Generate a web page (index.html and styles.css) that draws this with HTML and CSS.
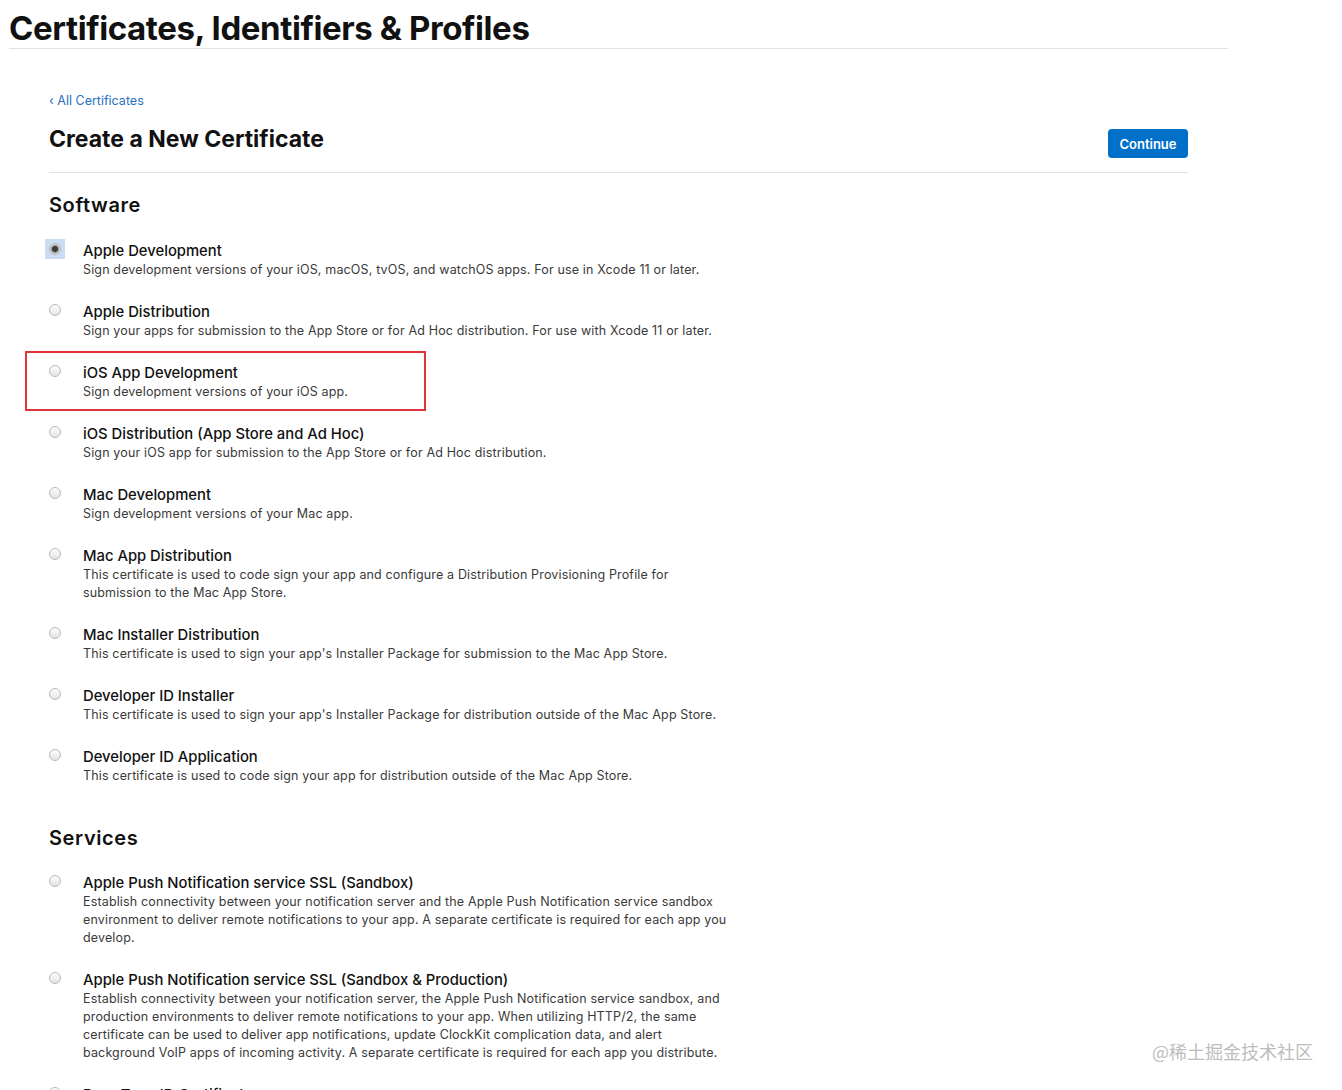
FILE: index.html
```html
<!DOCTYPE html>
<html lang="en">

<head>
	<meta charset="UTF-8">
	<meta name="viewport" content="width=device-width, initial-scale=1.0">
	<title>Certificates, Identifiers &amp; Profiles</title>
	<link rel="stylesheet" href="styles.css">
</head>

<body>
	<header class="page-header">
		<h1>Certificates, Identifiers &amp; Profiles</h1>
	</header>

	<main class="content">
		<a class="back-link" href="#">&lsaquo; All Certificates</a>

		<div class="title-row">
			<h2 class="page-title">Create a New Certificate</h2>
			<button class="btn-continue">Continue</button>
		</div>

		<section class="cert-section">
			<h3>Software</h3>
			<ul class="cert-list">
				<li class="cert-item">
					<span class="radio-box focused"><input type="radio" name="cert" class="radio" checked></span>
					<div class="cert-text">
						<div class="cert-name">Apple Development</div>
						<p class="cert-desc">Sign development versions of your iOS, macOS, tvOS, and watchOS apps. For use in Xcode 11 or later.</p>
					</div>
				</li>
				<li class="cert-item">
					<span class="radio-box"><input type="radio" name="cert" class="radio"></span>
					<div class="cert-text">
						<div class="cert-name">Apple Distribution</div>
						<p class="cert-desc">Sign your apps for submission to the App Store or for Ad Hoc distribution. For use with Xcode 11 or later.</p>
					</div>
				</li>
				<li class="cert-item marked">
					<span class="radio-box"><input type="radio" name="cert" class="radio"></span>
					<div class="cert-text">
						<div class="cert-name">iOS App Development</div>
						<p class="cert-desc">Sign development versions of your iOS app.</p>
					</div>
				</li>
				<li class="cert-item">
					<span class="radio-box"><input type="radio" name="cert" class="radio"></span>
					<div class="cert-text">
						<div class="cert-name">iOS Distribution (App Store and Ad Hoc)</div>
						<p class="cert-desc">Sign your iOS app for submission to the App Store or for Ad Hoc distribution.</p>
					</div>
				</li>
				<li class="cert-item">
					<span class="radio-box"><input type="radio" name="cert" class="radio"></span>
					<div class="cert-text">
						<div class="cert-name">Mac Development</div>
						<p class="cert-desc">Sign development versions of your Mac app.</p>
					</div>
				</li>
				<li class="cert-item">
					<span class="radio-box"><input type="radio" name="cert" class="radio"></span>
					<div class="cert-text">
						<div class="cert-name">Mac App Distribution</div>
						<p class="cert-desc">This certificate is used to code sign your app and configure a Distribution Provisioning Profile for submission to the Mac App Store.</p>
					</div>
				</li>
				<li class="cert-item">
					<span class="radio-box"><input type="radio" name="cert" class="radio"></span>
					<div class="cert-text">
						<div class="cert-name">Mac Installer Distribution</div>
						<p class="cert-desc">This certificate is used to sign your app's Installer Package for submission to the Mac App Store.</p>
					</div>
				</li>
				<li class="cert-item">
					<span class="radio-box"><input type="radio" name="cert" class="radio"></span>
					<div class="cert-text">
						<div class="cert-name">Developer ID Installer</div>
						<p class="cert-desc">This certificate is used to sign your app's Installer Package for distribution outside of the Mac App Store.</p>
					</div>
				</li>
				<li class="cert-item">
					<span class="radio-box"><input type="radio" name="cert" class="radio"></span>
					<div class="cert-text">
						<div class="cert-name">Developer ID Application</div>
						<p class="cert-desc">This certificate is used to code sign your app for distribution outside of the Mac App Store.</p>
					</div>
				</li>
			</ul>
		</section>

		<section class="cert-section">
			<h3>Services</h3>
			<ul class="cert-list">
				<li class="cert-item">
					<span class="radio-box"><input type="radio" name="cert" class="radio"></span>
					<div class="cert-text">
						<div class="cert-name">Apple Push Notification service SSL (Sandbox)</div>
						<p class="cert-desc">Establish connectivity between your notification server and the Apple Push Notification service sandbox environment to deliver remote notifications to your app. A separate certificate is required for each app you develop.</p>
					</div>
				</li>
				<li class="cert-item">
					<span class="radio-box"><input type="radio" name="cert" class="radio"></span>
					<div class="cert-text">
						<div class="cert-name">Apple Push Notification service SSL (Sandbox &amp; Production)</div>
						<p class="cert-desc">Establish connectivity between your notification server, the Apple Push Notification service sandbox, and production environments to deliver remote notifications to your app. When utilizing HTTP/2, the same certificate can be used to deliver app notifications, update ClockKit complication data, and alert background VoIP apps of incoming activity. A separate certificate is required for each app you distribute.</p>
					</div>
				</li>
				<li class="cert-item">
					<span class="radio-box"><input type="radio" name="cert" class="radio"></span>
					<div class="cert-text">
						<div class="cert-name">Pass Type ID Certificate</div>
						<p class="cert-desc">Sign and send updates to passes in Wallet.</p>
					</div>
				</li>
			</ul>
		</section>
	</main>

	<div class="watermark">@稀土掘金技术社区</div>
</body>

</html>
```

FILE: styles.css
```css
body {
	margin: 0;
	font-family: 'Inter', 'Noto Sans', sans-serif;
	color: #1d1d1f;
	background: #fff;
	height: 1090px;
	overflow: hidden;
	position: relative;
}

.page-header {
	margin-left: 9px;
	width: 1219px;
	border-bottom: 1px solid #e2e2e2;
}

.page-header h1 {
	margin: 0;
	padding-top: 9px;
	font-size: 33px;
	line-height: 39px;
	font-weight: 700;
	letter-spacing: -0.4px;
	color: #111;
}

.content {
	margin-left: 49px;
	width: 1139px;
}

.back-link {
	display: block;
	margin-top: 44px;
	font-size: 12.5px;
	line-height: 16px;
	color: #2a70c0;
	text-decoration: none;
}

.title-row {
	display: flex;
	justify-content: space-between;
	align-items: flex-start;
	margin-top: 15px;
	padding-bottom: 14px;
	border-bottom: 1px solid #e2e2e2;
}

.page-title {
	margin: 0;
	font-size: 23px;
	line-height: 30px;
	font-weight: 700;
	color: #111;
}

.btn-continue {
	margin-top: 5px;
	width: 80px;
	height: 29px;
	padding: 0;
	border: none;
	border-radius: 4px;
	background: #0070c9;
	color: #fff;
	font-family: inherit;
	font-size: 13px;
	font-weight: 600;
	cursor: pointer;
}

.cert-section h3 {
	margin: 20px 0 24px;
	font-size: 20px;
	line-height: 24px;
	font-weight: 600;
	letter-spacing: 0.6px;
	color: #111;
}

.cert-section + .cert-section h3 {
	margin-top: 41px;
	margin-bottom: 23px;
}

.cert-list {
	list-style: none;
	margin: 0;
	padding: 0;
}

.cert-item {
	display: flex;
	align-items: flex-start;
	gap: 22px;
	margin-bottom: 23px;
	position: relative;
}

.cert-item.marked::after {
	content: "";
	position: absolute;
	top: -12px;
	left: -24px;
	width: 397px;
	height: 56px;
	border: 2px solid #e2353b;
}

.radio-box {
	display: flex;
	flex: none;
	margin: -2px -4px 0;
	padding: 4px;
}

.radio-box.focused {
	background: #c9dcf4;
}

.radio {
	appearance: none;
	-webkit-appearance: none;
	display: block;
	width: 12px;
	height: 12px;
	margin: 0;
	border: 1px solid #b9b9b9;
	border-radius: 50%;
	background: linear-gradient(#fdfdfd, #e4e4e4);
}

.radio:checked {
	background: radial-gradient(circle, #3c3c3c 0 2.5px, #9a9a9a 3.5px, #e2e2e2 5px);
}

.cert-name {
	font-size: 14.8px;
	line-height: 20px;
	font-weight: 500;
	color: #111;
}

.cert-desc {
	margin: 0;
	max-width: 648px;
	font-size: 12.5px;
	line-height: 18px;
	color: #3a3a3a;
	letter-spacing: 0.15px;
}

.watermark {
	position: absolute;
	right: 29px;
	top: 1039px;
	font-size: 18px;
	line-height: 24px;
	color: #bdbdbd;
	font-family: 'Noto Sans CJK SC', sans-serif;
}
```
